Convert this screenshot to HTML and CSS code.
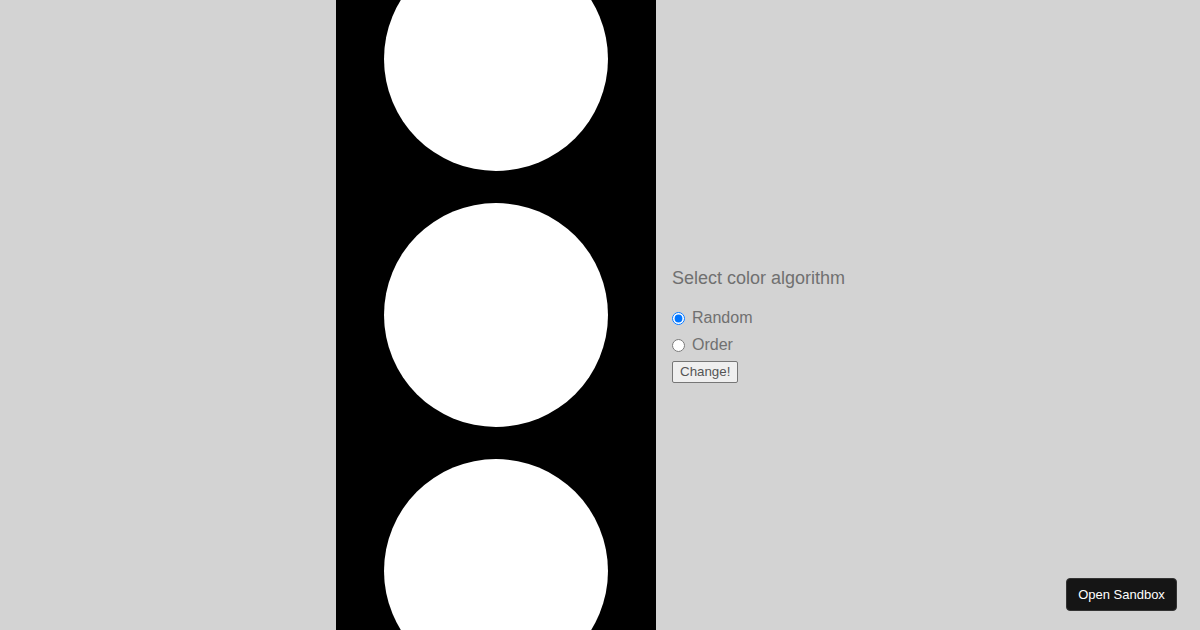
FILE: index.html
```html
<!DOCTYPE html>
<html>
<head>
<meta charset="utf-8">
<link rel="stylesheet" href="styles.css">
</head>
<body>
<div class="stage">
  <div class="lights">
    <div class="light"></div>
    <div class="light"></div>
    <div class="light"></div>
  </div>
  <div class="panel">
    <h2 class="title">Select color algorithm</h2>
    <label class="option"><input type="radio" name="algo" checked> Random</label>
    <label class="option"><input type="radio" name="algo"> Order</label>
    <button class="change">Change!</button>
  </div>
</div>
<button class="sandbox">Open Sandbox</button>
</body>
</html>
```
FILE: styles.css
```css
html, body {
  margin: 0;
  height: 630px;
  overflow: hidden;
}
body {
  background: #d3d3d3;
  font-family: "Liberation Sans", Arial, sans-serif;
}
.stage {
  height: 630px;
  display: flex;
  justify-content: center;
  align-items: center;
}
.lights {
  width: 320px;
  background: #000;
  padding: 16px 48px;
  box-sizing: border-box;
  flex-shrink: 0;
  display: flex;
  flex-direction: column;
  gap: 32px;
}
.light {
  width: 224px;
  height: 224px;
  flex-shrink: 0;
  border-radius: 50%;
  background: #fff;
}
.panel {
  width: 192px;
  padding-left: 16px;
  display: flex;
  flex-direction: column;
  align-items: flex-start;
  color: #707070;
  margin-top: 28px;
  white-space: nowrap;
}
.title {
  font-size: 18px;
  font-weight: normal;
  margin: -8px 0 20px;
  line-height: 21px;
}
.option {
  font-size: 16px;
  line-height: 18px;
  height: 27px;
  display: flex;
  align-items: flex-start;
}
.option input {
  margin: 3px 7px 0 0;
  width: 13px;
  height: 13px;
}
.change {
  font-family: "Liberation Sans", Arial, sans-serif;
  font-size: 13.33px;
  color: #555;
  background: #efefef;
  border: 1px solid #767676;
  border-radius: 2px;
  box-sizing: border-box;
  height: 22px;
  padding: 1px 7px;
  margin-top: -2px;
}
.sandbox {
  position: fixed;
  right: 23px;
  bottom: 19px;
  width: 111px;
  height: 33px;
  background: #151515;
  color: #fff;
  border: 1px solid #333;
  border-radius: 4px;
  font-family: "Liberation Sans", Arial, sans-serif;
  font-size: 13px;
  padding: 0;
}
```
